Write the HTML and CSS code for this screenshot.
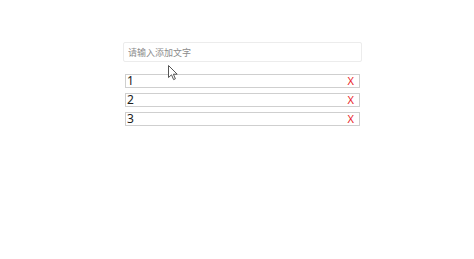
FILE: index.html
```html
<!DOCTYPE html>
<html lang="zh-CN">
<head>
<meta charset="utf-8">
<title>Todo</title>
<link rel="stylesheet" href="styles.css">
</head>
<body>
<div class="app">
  <input class="add-input" type="text" placeholder="请输入添加文字">
  <ul class="list">
    <li class="item"><span class="text">1</span><span class="del">X</span></li>
    <li class="item"><span class="text">2</span><span class="del">X</span></li>
    <li class="item"><span class="text">3</span><span class="del">X</span></li>
  </ul>
</div>
<svg class="cursor" width="12" height="16" viewBox="0 0 12 16" xmlns="http://www.w3.org/2000/svg">
  <path d="M0.5 0.5 L0.5 12.5 L3.5 9.8 L5.6 14.6 L7.4 13.8 L5.4 9.2 L9.2 9.2 Z" fill="#fff" stroke="#555" stroke-width="1" stroke-linejoin="round"/>
</svg>
</body>
</html>
```

FILE: styles.css
```css
html, body {
  margin: 0;
  padding: 0;
  background: #fff;
}
body {
  width: 474px;
  height: 259px;
  position: relative;
  font-family: "Noto Sans", "Noto Sans CJK SC", sans-serif;
}
.app {
  padding-top: 42px;
  margin-left: 123px;
  width: 240px;
}
.add-input {
  display: block;
  box-sizing: border-box;
  width: 239px;
  height: 20px;
  margin: 0;
  padding: 0 0 0 4px;
  border: 1px solid #ececec;
  border-radius: 2px;
  font-family: "Noto Sans CJK SC", sans-serif;
  font-size: 9px;
  color: #333;
  outline: none;
}
.add-input::placeholder {
  color: #8c8c8c;
}
.list {
  list-style: none;
  margin: 12px 0 0 2px;
  padding: 0;
}
.item {
  box-sizing: border-box;
  width: 235px;
  height: 14px;
  margin-bottom: 5px;
  border: 1px solid #cfcfcf;
  display: flex;
  justify-content: space-between;
  align-items: center;
  font-size: 12px;
  line-height: 12px;
  color: #222;
  padding: 0 5px 0 1px;
}
.del {
  color: #e8262b;
  font-size: 11px;
}
.cursor {
  position: absolute;
  left: 168px;
  top: 65px;
}
```
